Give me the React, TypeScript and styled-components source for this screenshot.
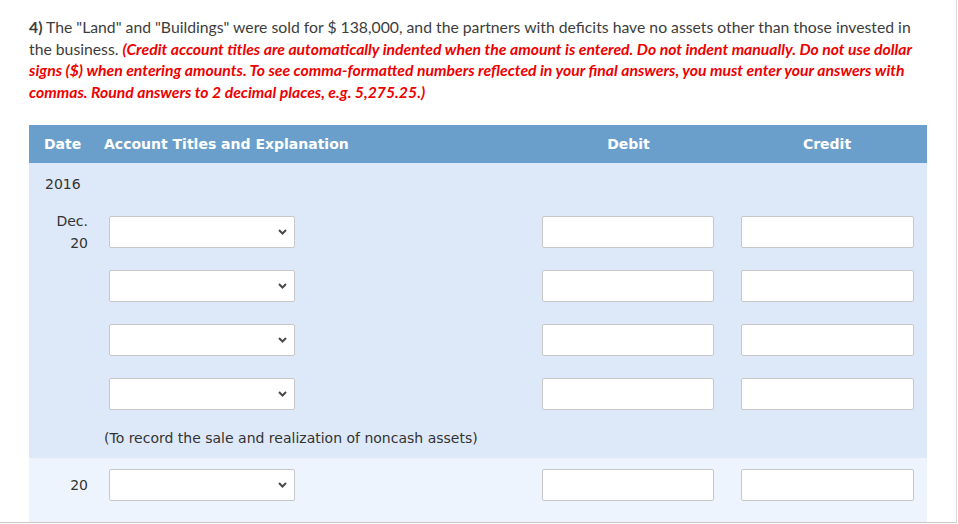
import styled, { createGlobalStyle } from 'styled-components';

const GlobalStyle = createGlobalStyle`
  html, body {
    margin: 0;
    padding: 0;
    background: #fff;
  }
  body {
    font-family: Lato, "Liberation Sans", sans-serif;
  }
`;

const Page = styled.div`
  box-sizing: border-box;
  width: 957px;
  height: 523px;
  overflow: hidden;
  border-right: 1px solid #d6d6d6;
  border-bottom: 1px solid #c9c9c9;
  padding: 16px 0 0 29px;
`;

const Question = styled.p`
  margin: 0;
  width: 898px;
  font-family: Lato, sans-serif;
  font-size: 15.75px;
  line-height: 21.5px;
  color: #3d3d3d;
`;

const Num = styled.b`
  font-weight: 700;
`;

const Instruction = styled.em`
  color: #ee0000;
  font-weight: 700;
  font-style: italic;
`;

const Table = styled.div`
  margin-top: 23px;
  width: 898px;
  font-family: "DejaVu Sans", Verdana, sans-serif;
  font-size: 14px;
  color: #333;
`;

const Grid = styled.div`
  display: grid;
  grid-template-columns: 75px 426px 197px 200px;
  align-items: center;
`;

const Header = styled(Grid)`
  height: 38px;
  background: #6a9fcb;
  color: #fff;
  font-weight: 700;
`;

const HeadCell = styled.div<{ $center?: boolean }>`
  padding-left: ${(p) => (p.$center ? '0' : '15px')};
  text-align: ${(p) => (p.$center ? 'center' : 'left')};
`;

const HeadTitle = styled.div`
  padding-left: 0;
`;

const Band = styled.div<{ $light?: boolean }>`
  background: ${(p) => (p.$light ? '#edf4fd' : '#dde9f8')};
`;

const YearRow = styled.div`
  height: 42px;
  display: flex;
  align-items: center;
  padding-left: 16px;
  line-height: 21px;
`;

const EntryRow = styled(Grid)`
  height: 54px;
`;

const DateCell = styled.div`
  text-align: right;
  padding-right: 16px;
  line-height: 22px;
`;

const SelectWrap = styled.div`
  position: relative;
  margin-left: 5px;
  width: 186px;
  height: 32px;
`;

const Select = styled.select`
  box-sizing: border-box;
  appearance: none;
  width: 100%;
  height: 100%;
  border: 1px solid #c8c8c8;
  border-radius: 2px;
  background: #fff;
  font-family: "DejaVu Sans", sans-serif;
  font-size: 14px;
  outline: none;
`;

const Chevron = styled.svg`
  position: absolute;
  right: 8px;
  top: 13px;
  pointer-events: none;
`;

const Amount = styled.input<{ $offset: number; $width: number }>`
  box-sizing: border-box;
  margin-left: ${(p) => p.$offset}px;
  width: ${(p) => p.$width}px;
  height: 32px;
  border: 1px solid #c8c8c8;
  border-radius: 2px;
  background: #fff;
  outline: none;
`;

const Explain = styled(Grid)`
  height: 37px;
  align-items: start;
  padding-top: 7px;
  box-sizing: border-box;
  line-height: 21px;
`;

function AccountSelect() {
  return (
    <SelectWrap>
      <Select defaultValue="">
        <option value=""></option>
      </Select>
      <Chevron width="9" height="6" viewBox="0 0 9 6">
        <path d="M1 1 L4.5 4.5 L8 1" fill="none" stroke="#4a4a4a" strokeWidth="2" />
      </Chevron>
    </SelectWrap>
  );
}

function Entry({ date }: { date?: React.ReactNode }) {
  return (
    <EntryRow>
      <DateCell>{date}</DateCell>
      <div>
        <AccountSelect />
      </div>
      <Amount type="text" $offset={12} $width={172} />
      <Amount type="text" $offset={14} $width={173} />
    </EntryRow>
  );
}

export default function App() {
  return (
    <>
      <GlobalStyle />
      <Page>
        <Question>
          <Num>4)</Num> The "Land" and "Buildings" were sold for $ 138,000, and the partners with deficits have no
          assets other than those invested in the business.{' '}
          <Instruction>
            (Credit account titles are automatically indented when the amount is entered. Do not indent manually. Do
            not use dollar signs ($) when entering amounts. To see comma-formatted numbers reflected in your final
            answers, you must enter your answers with commas. Round answers to 2 decimal places, e.g. 5,275.25.)
          </Instruction>
        </Question>

        <Table>
          <Header>
            <HeadCell>Date</HeadCell>
            <HeadTitle>Account Titles and Explanation</HeadTitle>
            <HeadCell $center>Debit</HeadCell>
            <HeadCell $center>Credit</HeadCell>
          </Header>

          <Band>
            <YearRow>2016</YearRow>
            <Entry
              date={
                <>
                  Dec.
                  <br />
                  20
                </>
              }
            />
            <Entry />
            <Entry />
            <Entry />
            <Explain>
              <div />
              <div>(To record the sale and realization of noncash assets)</div>
            </Explain>
          </Band>

          <Band $light>
            <Entry date="20" />
            <Entry />
            <Entry />
          </Band>
        </Table>
      </Page>
    </>
  );
}
